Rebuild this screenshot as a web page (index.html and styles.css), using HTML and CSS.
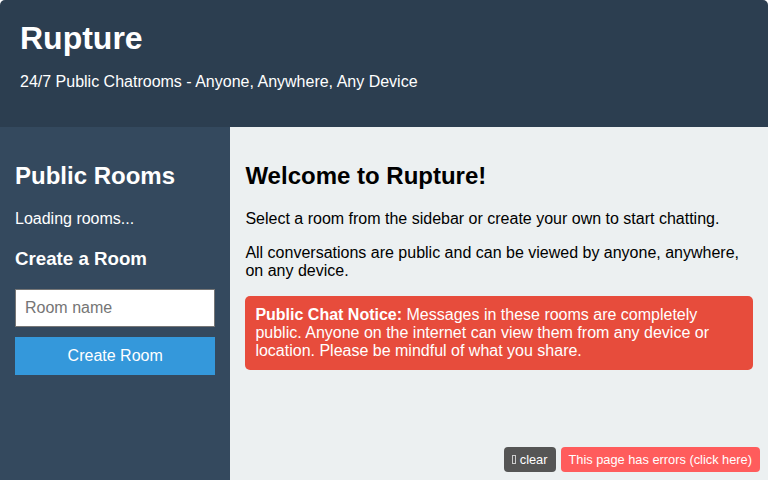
FILE: index.html
```html
<!DOCTYPE html>
<html lang="en">
<head>
<meta charset="utf-8">
<meta name="viewport" content="width=device-width, initial-scale=1">
<title>Rupture</title>
<link rel="stylesheet" href="styles.css">
</head>
<body>
<header class="site-header">
  <h1>Rupture</h1>
  <p>24/7 Public Chatrooms - Anyone, Anywhere, Any Device</p>
</header>
<div class="layout">
  <aside class="sidebar">
    <h2>Public Rooms</h2>
    <p>Loading rooms...</p>
    <h3>Create a Room</h3>
    <form class="room-form">
      <input type="text" placeholder="Room name" aria-label="Room name">
      <button type="button">Create Room</button>
    </form>
  </aside>
  <main class="content">
    <h2>Welcome to Rupture!</h2>
    <p>Select a room from the sidebar or create your own to start chatting.</p>
    <p>All conversations are public and can be viewed by anyone, anywhere, on any device.</p>
    <div class="notice"><strong>Public Chat Notice:</strong> Messages in these rooms are completely public. Anyone on the internet can view them from any device or location. Please be mindful of what you share.</div>
  </main>
</div>
<div class="error-bar">
  <button class="clear" type="button"><span class="box-icon" aria-hidden="true"></span> clear</button>
  <button class="errors" type="button">This page has errors (click here)</button>
</div>
</body>
</html>
```
FILE: styles.css
```css
* {
  box-sizing: border-box;
}

body {
  display: flex;
  flex-direction: column;
  min-height: 100vh;
  margin: 0;
  background: #fff;
  color: #000;
  font-family: "Liberation Sans", Arial, sans-serif;
  font-size: 16px;
}

button,
input {
  font: inherit;
}

.site-header {
  padding: 20px;
  border-radius: 5px 5px 0 0;
  background: #2c3e50;
  color: #fff;
}

.site-header h1 {
  margin: 0;
  font-size: 32px;
  line-height: 37px;
}

.layout {
  display: flex;
  flex: 1;
}

.sidebar {
  width: 30%;
  padding: 15px;
  background: #34495e;
  color: #fff;
}

.content {
  flex: 1;
  padding: 15px;
  background: #ecf0f1;
}

h2 {
  margin: 20px 0;
  font-size: 24px;
  line-height: 28px;
}

h3 {
  margin: 20px 0 19px;
  font-size: 1.17em;
  line-height: 22px;
}

p {
  margin: 16px 0;
  line-height: 18px;
}

.room-form {
  display: flex;
  flex-direction: column;
  gap: 10px;
}

.room-form input {
  width: 100%;
  height: 38px;
  padding: 9px;
  border: 1px solid #767676;
}

.room-form button {
  height: 38px;
  border: 0;
  background: #3498db;
  color: #fff;
  cursor: pointer;
}

.notice {
  padding: 10px;
  border-radius: 5px;
  background: #e74c3c;
  color: #fff;
  line-height: 18px;
}

.error-bar {
  position: fixed;
  right: 8px;
  bottom: 8px;
  display: flex;
  gap: 5px;
}

.error-bar button {
  padding: 5px 8px;
  border: 0;
  border-radius: 4px;
  color: #fff;
  font-size: 0.8em;
  line-height: 15px;
}

.error-bar .clear {
  background: #555;
}

.box-icon {
  display: inline-block;
  width: 4px;
  height: 9px;
  border: 1px solid #ccc;
}

.error-bar .errors {
  background: #ff5c5c;
}
```
